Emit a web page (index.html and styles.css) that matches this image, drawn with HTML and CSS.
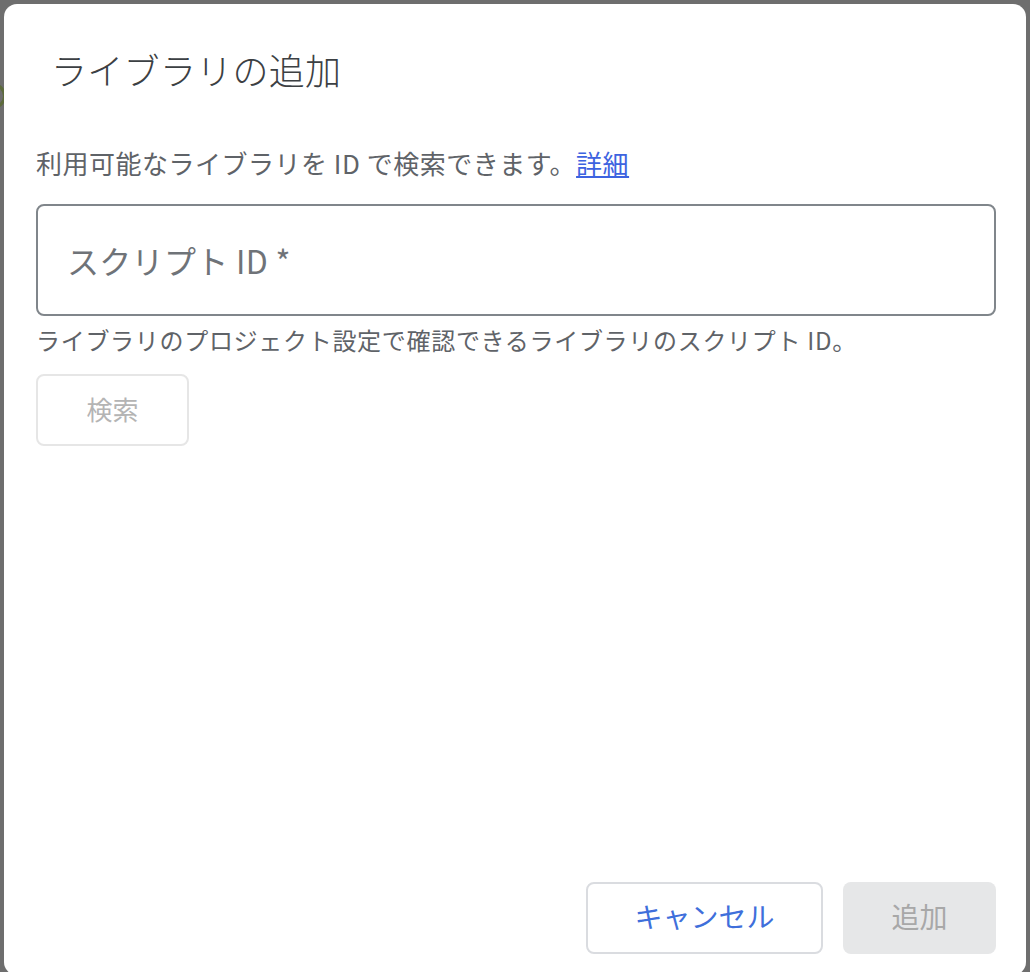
FILE: index.html
```html
<!DOCTYPE html>
<html lang="ja">
<head>
    <meta charset="UTF-8">
    <title>ライブラリの追加</title>
    <link rel="stylesheet" href="styles.css">
</head>
<body>
    <div class="under-logo"></div>
    <div class="dialog">
        <h1 class="dialog__title">ライブラリの追加</h1>
        <p class="dialog__desc">利用可能なライブラリを ID で検索できます。<a href="#">詳細</a></p>
        <div class="field">
            <span class="field__label">スクリプト ID *</span>
        </div>
        <p class="field__hint">ライブラリのプロジェクト設定で確認できるライブラリのスクリプト ID。</p>
        <div class="search">
            <button class="btn btn--outline btn--disabled">検索</button>
        </div>
        <div class="dialog__footer">
            <button class="btn btn--outline btn--cancel">キャンセル</button>
            <button class="btn btn--filled">追加</button>
        </div>
    </div>
</body>
</html>
```

FILE: styles.css
```css
html, body {
    margin: 0;
    height: 100%;
}

body {
    box-sizing: border-box;
    overflow: hidden;
    padding: 4px 4px 0;
    background: #6e6e6e;
    font-family: "Noto Sans CJK JP", "Noto Sans", sans-serif;
}

.under-logo {
    position: absolute;
    top: 83px;
    left: -20px;
    width: 20px;
    height: 20px;
    border: 3px solid #5d6b3c;
    border-radius: 50%;
}

.dialog {
    position: relative;
    box-sizing: border-box;
    display: flex;
    flex-direction: column;
    height: 971px;
    padding: 43px 30px 21px 32px;
    border-radius: 13px;
    background: #fff;
}

.dialog__title {
    margin: 0 0 0 15px;
    font-size: 36px;
    line-height: 44px;
    font-weight: 300;
    letter-spacing: .3px;
    color: #3c4043;
}

.dialog__desc {
    margin: 54px 0 0;
    font-size: 26px;
    line-height: 36px;
    letter-spacing: .5px;
    color: #5f6368;
}

.dialog__desc a {
    color: #3d63e0;
    text-decoration: underline;
}

.field {
    box-sizing: border-box;
    display: flex;
    align-items: center;
    height: 112px;
    margin-top: 23px;
    padding: 0 29px;
    border: 2px solid #80868b;
    border-radius: 8px;
}

.field__label {
    font-size: 32px;
    letter-spacing: .3px;
    color: #6f7378;
}

.field__hint {
    margin: 9px 0 0;
    font-size: 24px;
    line-height: 30px;
    letter-spacing: .7px;
    color: #5f6368;
}

.search {
    margin-top: 19px;
}

.btn {
    box-sizing: border-box;
    height: 72px;
    padding: 0 0 4px;
    border-radius: 8px;
    font-family: inherit;
    font-size: 28px;
    background: #fff;
}

.btn--outline {
    border: 2px solid #dadce0;
}

.btn--disabled {
    width: 153px;
    border-color: #e6e6e6;
    font-size: 26px;
    color: #b4b4b4;
}

.dialog__footer {
    display: flex;
    justify-content: flex-end;
    gap: 20px;
    margin-top: auto;
}

.btn--cancel {
    width: 237px;
    color: #3f6fdb;
}

.btn--filled {
    width: 153px;
    border: none;
    background: #e6e7e8;
    color: #a8a8a8;
}
```
